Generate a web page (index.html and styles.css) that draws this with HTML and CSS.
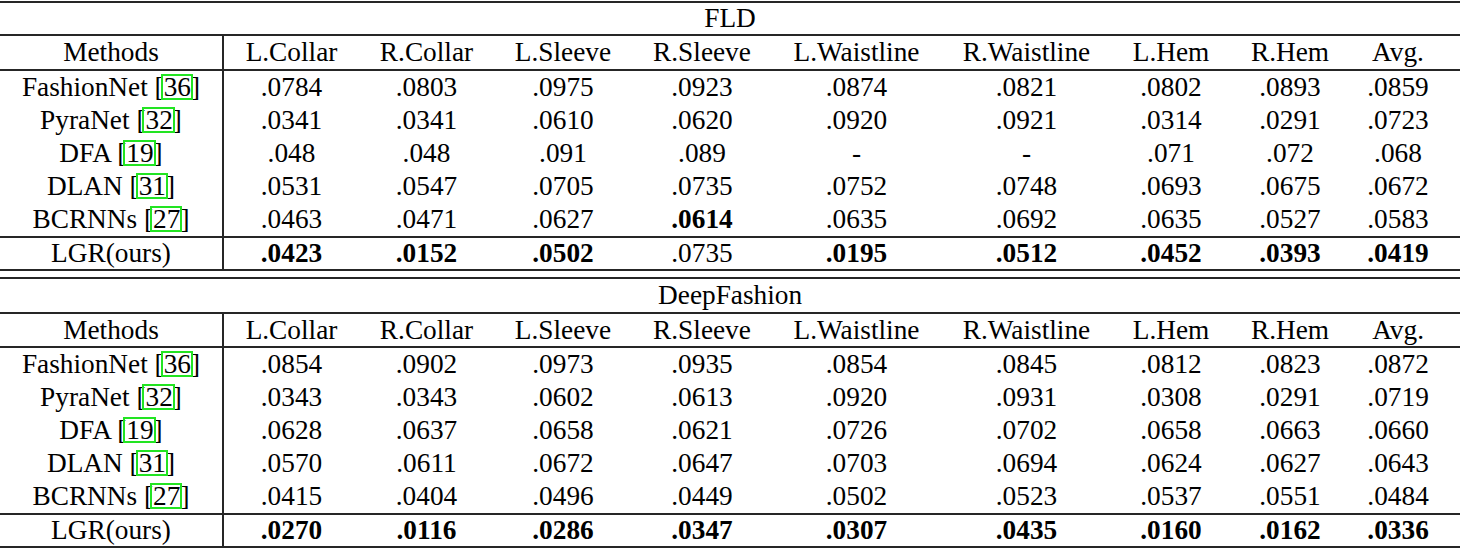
FILE: index.html
```html
<!DOCTYPE html>
<html>
<head>
<meta charset="utf-8">
<link rel="stylesheet" href="styles.css">
</head>
<body>
<div class="page">
<table class="res first">
  <colgroup>
    <col class="c0"><col class="c1"><col class="c2"><col class="c3"><col class="c4"><col class="c5"><col class="c6"><col class="c7"><col class="c8"><col class="c9">
  </colgroup>
  <tr class="title"><td colspan="10">FLD</td></tr>
  <tr class="head">
    <td class="m">Methods</td><td>L.Collar</td><td>R.Collar</td><td>L.Sleeve</td><td>R.Sleeve</td><td>L.Waistline</td><td>R.Waistline</td><td>L.Hem</td><td>R.Hem</td><td class="avg">Avg.</td>
  </tr>
  <tr><td class="m">FashionNet [<span class="cite">36</span>]</td><td>.0784</td><td>.0803</td><td>.0975</td><td>.0923</td><td>.0874</td><td>.0821</td><td>.0802</td><td>.0893</td><td class="avg">.0859</td></tr>
  <tr><td class="m">PyraNet [<span class="cite">32</span>]</td><td>.0341</td><td>.0341</td><td>.0610</td><td>.0620</td><td>.0920</td><td>.0921</td><td>.0314</td><td>.0291</td><td class="avg">.0723</td></tr>
  <tr><td class="m">DFA [<span class="cite">19</span>]</td><td>.048</td><td>.048</td><td>.091</td><td>.089</td><td>-</td><td>-</td><td>.071</td><td>.072</td><td class="avg">.068</td></tr>
  <tr><td class="m">DLAN [<span class="cite">31</span>]</td><td>.0531</td><td>.0547</td><td>.0705</td><td>.0735</td><td>.0752</td><td>.0748</td><td>.0693</td><td>.0675</td><td class="avg">.0672</td></tr>
  <tr class="lastdata"><td class="m">BCRNNs [<span class="cite">27</span>]</td><td>.0463</td><td>.0471</td><td>.0627</td><td><b>.0614</b></td><td>.0635</td><td>.0692</td><td>.0635</td><td>.0527</td><td class="avg">.0583</td></tr>
  <tr class="ours"><td class="m">LGR(ours)</td><td><b>.0423</b></td><td><b>.0152</b></td><td><b>.0502</b></td><td>.0735</td><td><b>.0195</b></td><td><b>.0512</b></td><td><b>.0452</b></td><td><b>.0393</b></td><td class="avg"><b>.0419</b></td></tr>
</table>
<table class="res second">
  <colgroup>
    <col class="c0"><col class="c1"><col class="c2"><col class="c3"><col class="c4"><col class="c5"><col class="c6"><col class="c7"><col class="c8"><col class="c9">
  </colgroup>
  <tr class="title"><td colspan="10">DeepFashion</td></tr>
  <tr class="head">
    <td class="m">Methods</td><td>L.Collar</td><td>R.Collar</td><td>L.Sleeve</td><td>R.Sleeve</td><td>L.Waistline</td><td>R.Waistline</td><td>L.Hem</td><td>R.Hem</td><td class="avg">Avg.</td>
  </tr>
  <tr><td class="m">FashionNet [<span class="cite">36</span>]</td><td>.0854</td><td>.0902</td><td>.0973</td><td>.0935</td><td>.0854</td><td>.0845</td><td>.0812</td><td>.0823</td><td class="avg">.0872</td></tr>
  <tr><td class="m">PyraNet [<span class="cite">32</span>]</td><td>.0343</td><td>.0343</td><td>.0602</td><td>.0613</td><td>.0920</td><td>.0931</td><td>.0308</td><td>.0291</td><td class="avg">.0719</td></tr>
  <tr><td class="m">DFA [<span class="cite">19</span>]</td><td>.0628</td><td>.0637</td><td>.0658</td><td>.0621</td><td>.0726</td><td>.0702</td><td>.0658</td><td>.0663</td><td class="avg">.0660</td></tr>
  <tr><td class="m">DLAN [<span class="cite">31</span>]</td><td>.0570</td><td>.0611</td><td>.0672</td><td>.0647</td><td>.0703</td><td>.0694</td><td>.0624</td><td>.0627</td><td class="avg">.0643</td></tr>
  <tr class="lastdata"><td class="m">BCRNNs [<span class="cite">27</span>]</td><td>.0415</td><td>.0404</td><td>.0496</td><td>.0449</td><td>.0502</td><td>.0523</td><td>.0537</td><td>.0551</td><td class="avg">.0484</td></tr>
  <tr class="ours"><td class="m">LGR(ours)</td><td><b>.0270</b></td><td><b>.0116</b></td><td><b>.0286</b></td><td><b>.0347</b></td><td><b>.0307</b></td><td><b>.0435</b></td><td><b>.0160</b></td><td><b>.0162</b></td><td class="avg"><b>.0336</b></td></tr>
</table>
</div>
</body>
</html>
```
FILE: styles.css
```css
html, body {
  margin: 0;
  padding: 0;
  background: #ffffff;
}
body {
  font-family: "Liberation Serif", "Times New Roman", serif;
  font-size: 27.3px;
  color: #000000;
}
.page {
  padding-top: 1px;
  width: 1460px;
}
.res {
  border-collapse: separate;
  border-spacing: 0;
  table-layout: fixed;
  width: 1460px;
  border-top: 2px solid #262626;
}
.res.second {
  margin-top: 6px;
}
.c0 { width: 224px; }
.c1 { width: 135px; }
.c2 { width: 135px; }
.c3 { width: 138px; }
.c4 { width: 140px; }
.c5 { width: 169px; }
.c6 { width: 171px; }
.c7 { width: 118px; }
.c8 { width: 120px; }
.c9 { width: 110px; }
.res td {
  padding: 0;
  text-align: center;
  white-space: nowrap;
  line-height: 33px;
}
.res td.m {
  border-right: 2px solid #262626;
}
.res td.avg {
  padding-right: 14px;
}
.res td b {
  font-weight: bold;
}
.first .title td {
  line-height: 31px;
  border-bottom: 2px solid #262626;
}
.second .title td {
  line-height: 33px;
  border-bottom: 2px solid #262626;
}
.first .head td {
  line-height: 33px;
  border-bottom: 2px solid #262626;
}
.second .head td {
  line-height: 32px;
  border-bottom: 2px solid #262626;
}
.lastdata td {
  border-bottom: 2px solid #262626;
}
.ours td {
  line-height: 31px;
  border-bottom: 2px solid #262626;
}
.cite {
  position: relative;
}
.cite::after {
  content: "";
  position: absolute;
  left: -3px;
  right: -2px;
  top: 2px;
  bottom: 2px;
  border: 2px solid #22e422;
}
```
